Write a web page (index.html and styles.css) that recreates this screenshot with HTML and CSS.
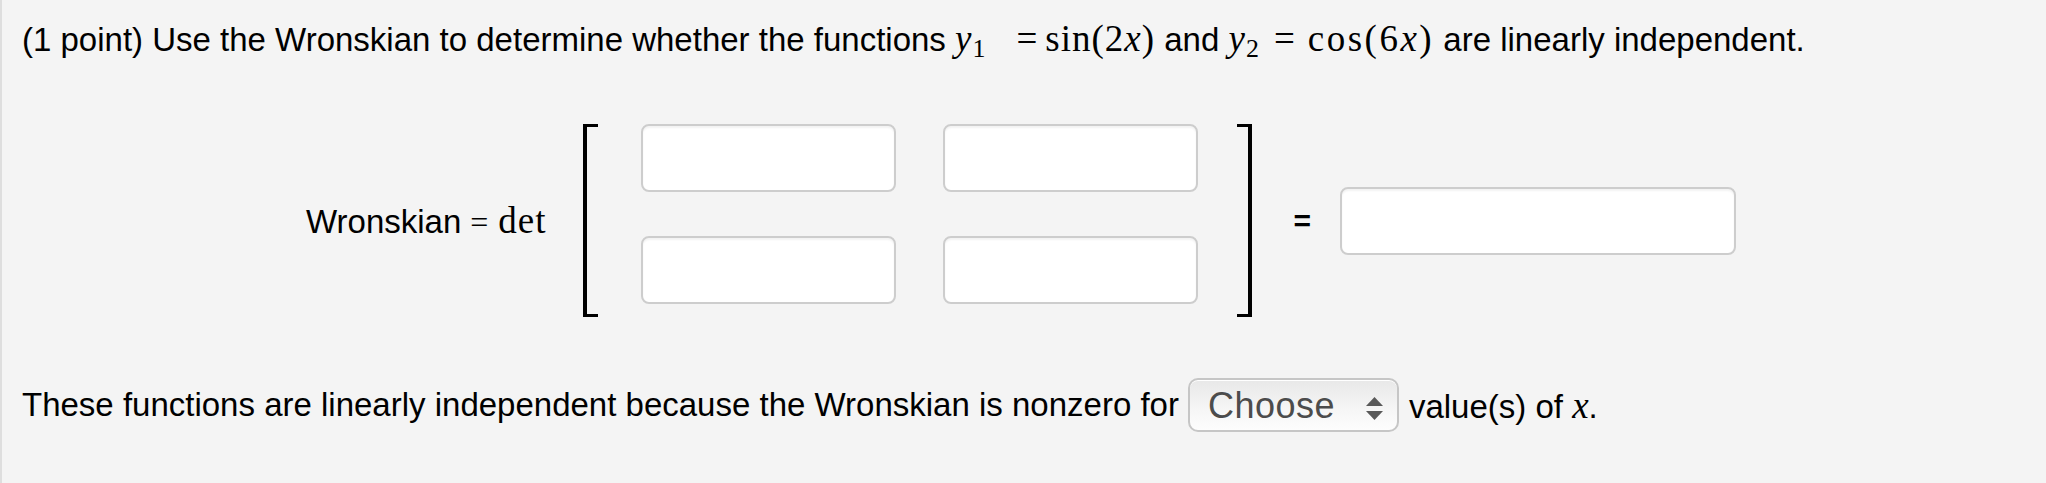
FILE: index.html
```html
<!DOCTYPE html>
<html>
<head>
<meta charset="utf-8">
<link rel="stylesheet" href="styles.css">
</head>
<body>
<div class="problem">
  <p class="stmt">(1 point) Use the Wronskian to determine whether the functions <span class="math m1"><i>y</i><sub>1</sub><span class="rel">=</span>sin(2<i>x</i>)</span> and <span class="math m2"><i>y</i><sub>2</sub><span class="rel">=</span><span class="cos">cos(6<i>x</i>)</span></span> are linearly independent.</p>

  <div class="wron">
    <div class="label">Wronskian<span class="mo">=</span><span class="mi">det</span></div>
    <div class="matrix">
      <div class="brk brk-l"></div>
      <div class="grid">
        <input class="cell" type="text">
        <input class="cell" type="text">
        <input class="cell" type="text">
        <input class="cell" type="text">
      </div>
      <div class="brk brk-r"></div>
    </div>
    <span class="mo eq2">=</span>
    <input class="cell result" type="text">
  </div>

  <div class="ans-line">
    <span class="txt">These functions are linearly independent because the Wronskian is nonzero for</span>
    <span class="sel-wrap">
      <select class="sel"><option>Choose</option></select>
      <svg class="sel-arrows" width="17" height="23" viewBox="0 0 17 23"><polygon points="8.5,0 17,9 0,9" fill="#595959"/><polygon points="0,14 17,14 8.5,23" fill="#595959"/></svg>
    </span>
    <span class="txt">value(s) of <i class="mx">x</i>.</span>
  </div>
</div>
</body>
</html>
```

FILE: styles.css
```css
html, body {
  margin: 0;
  padding: 0;
  background: #f4f4f4;
}

.problem {
  min-height: 483px;
  box-sizing: border-box;
  border-left: 2px solid #dedede;
  padding: 17px 0 0 20px;
  font-family: "Liberation Sans", Arial, Helvetica, sans-serif;
  font-size: 33px;
  color: #000;
}

.stmt {
  margin: 0;
  line-height: 46px;
  white-space: nowrap;
}

.math {
  font-family: "Liberation Serif", "Times New Roman", serif;
  font-size: 37px;
  line-height: 1;
  letter-spacing: 1px;
}

.math i, .mx {
  font-family: "Liberation Serif", "Times New Roman", serif;
  font-style: italic;
}

.math sub {
  font-size: 0.7em;
  line-height: 0;
  vertical-align: -0.25em;
  margin-right: 6px;
}

.m1 .rel {
  margin: 0 7px 0 24px;
}

.m2 .rel {
  margin: 0 12px 0 8px;
}

.cos {
  letter-spacing: 2.5px;
}

.wron {
  display: flex;
  align-items: center;
  margin: 61px 0 0 284px;
}

.label {
  display: flex;
  align-items: baseline;
  margin-right: 36px;
}

.mo {
  font-family: "Liberation Serif", "Times New Roman", serif;
  font-size: 32px;
}

.label .mo {
  margin: 0 10px 0 9px;
}

.mi {
  font-family: "Liberation Serif", "Times New Roman", serif;
  font-size: 37px;
  letter-spacing: 1px;
}

.matrix {
  display: flex;
  align-items: flex-start;
}

.brk {
  width: 15px;
  height: 193px;
  box-sizing: border-box;
  border-top: 3px solid #000;
  border-bottom: 3px solid #000;
}

.brk-l {
  border-left: 4px solid #000;
  margin-right: 43px;
}

.brk-r {
  border-right: 4px solid #000;
  margin-left: 39px;
}

.grid {
  display: grid;
  grid-template-columns: 255px 255px;
  grid-template-rows: 68px 68px;
  column-gap: 47px;
  row-gap: 44px;
}

.cell {
  box-sizing: border-box;
  width: 255px;
  height: 68px;
  margin: 0;
  padding: 0 10px;
  border: 2px solid #cdcdcd;
  border-radius: 8px;
  background: #fff;
  box-shadow: inset 0 2px 2px rgba(0, 0, 0, 0.05);
  outline: none;
  font-size: 28px;
}

.eq2 {
  margin-left: 42px;
  font-family: "Liberation Sans", Arial, sans-serif;
  font-size: 30px;
  font-weight: bold;
}

.result {
  width: 396px;
  margin-left: 29px;
}

.ans-line {
  display: flex;
  align-items: center;
  margin-top: 61px;
  white-space: nowrap;
}

.sel-wrap {
  position: relative;
  display: inline-block;
  margin: 0 10px 0 9px;
}

.sel {
  -webkit-appearance: none;
  appearance: none;
  display: block;
  box-sizing: border-box;
  width: 211px;
  height: 54px;
  margin: 0;
  padding: 0 0 0 18px;
  border: 2px solid #c6c6c6;
  border-radius: 10px;
  background: linear-gradient(#e8e8e8, #f6f6f6 60%, #fdfdfd);
  box-shadow: inset 0 1px 0 #fff;
  font-family: "Liberation Sans", Arial, Helvetica, sans-serif;
  font-size: 36px;
  letter-spacing: 0.5px;
  color: #4c4c4c;
  outline: none;
}

.sel-arrows {
  position: absolute;
  left: 178px;
  top: 19px;
}

.mx {
  font-size: 37px;
}
```
